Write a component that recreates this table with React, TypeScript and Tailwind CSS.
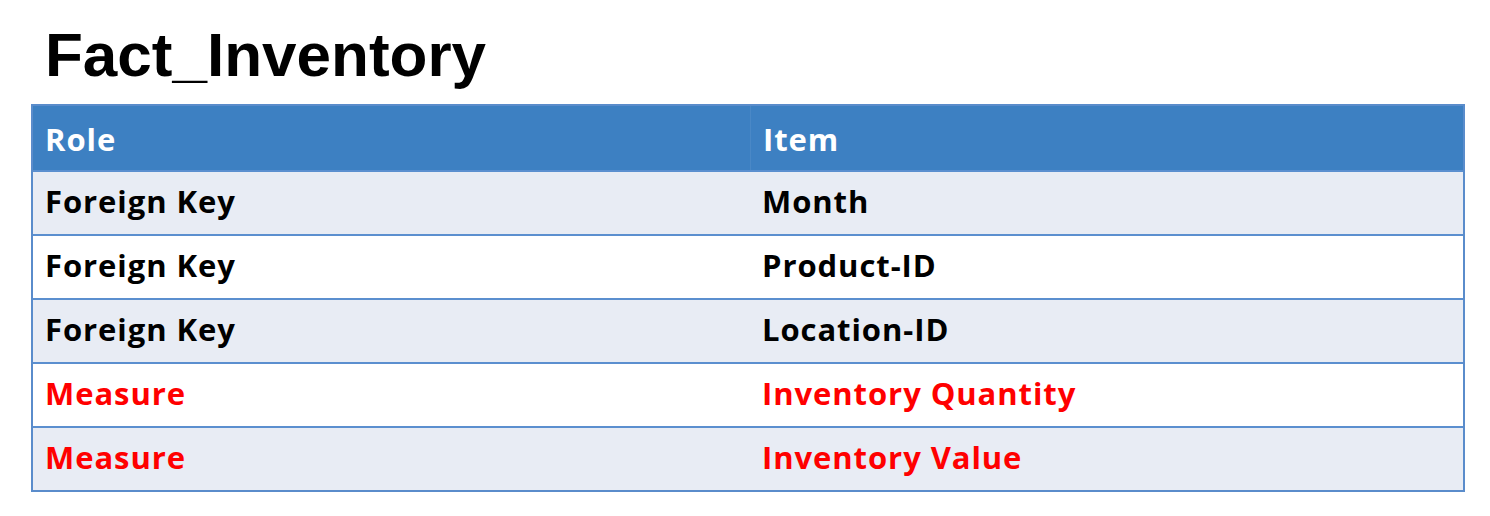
import React from "react";

const rows: { role: string; item: string; red?: boolean }[] = [
  { role: "Foreign Key", item: "Month" },
  { role: "Foreign Key", item: "Product-ID" },
  { role: "Foreign Key", item: "Location-ID" },
  { role: "Measure", item: "Inventory Quantity", red: true },
  { role: "Measure", item: "Inventory Value", red: true },
];

export default function App() {
  return (
    <div className="w-[1490px] h-[516px] bg-white overflow-hidden">
      <div
        className="pl-[45px] pt-[24px] text-[62px] leading-none font-bold text-black"
        style={{ fontFamily: '"Liberation Sans", Arial, sans-serif' }}
      >
        Fact_Inventory
      </div>
      <div
        className="ml-[31px] mt-[18px] w-[1434px] border-2 border-[#5a8ccb] text-[31px] font-bold tracking-[0.03em]"
        style={{ fontFamily: '"Open Sans", sans-serif' }}
      >
        <div className="grid grid-cols-[717px_1fr] h-[64px] bg-[#3d80c2] text-white">
          <div className="flex items-center pl-[12px] pt-[2px]">Role</div>
          <div className="flex items-center pl-[12px] pt-[2px] border-l border-[#4a88c6]">Item</div>
        </div>
        {rows.map((r, i) => (
          <div
            key={i}
            className={`grid grid-cols-[717px_1fr] h-[64px] border-t-2 border-[#5b8fcf] ${
              i % 2 === 0 ? "bg-[#e8ecf4]" : "bg-white"
            } ${r.red ? "text-[#ff0000]" : "text-black"}`}
          >
            <div className="flex items-center pl-[12px] pb-[4px]">{r.role}</div>
            <div className="flex items-center pl-[12px] pb-[4px]">{r.item}</div>
          </div>
        ))}
      </div>
    </div>
  );
}
